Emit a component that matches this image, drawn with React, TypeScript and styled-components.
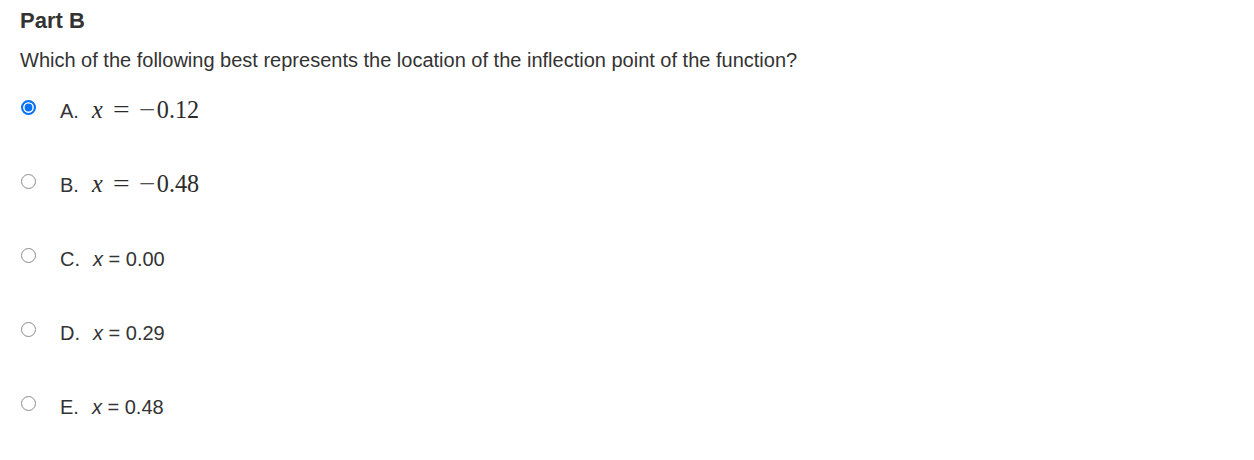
import React from "react";
import styled, { createGlobalStyle } from "styled-components";

const GlobalStyle = createGlobalStyle`
  html, body {
    margin: 0;
    padding: 0;
    background: #ffffff;
  }
  body {
    font-family: "Liberation Sans", Arial, sans-serif;
    color: #333333;
  }
`;

const Page = styled.main`
  padding: 8px 20px;
`;

const Heading = styled.h2`
  margin: 0;
  font-size: 22px;
  line-height: 25px;
  font-weight: 700;
  color: #333333;
`;

const Question = styled.p`
  margin: 16px 0 0;
  font-size: 20px;
  line-height: 23px;
`;

const OptionList = styled.div`
  margin-top: 24px;
  display: flex;
  flex-direction: column;
  gap: 44px;
`;

const Option = styled.label`
  display: flex;
  align-items: flex-start;
  height: 30px;
  cursor: pointer;
`;

const Radio = styled.input.attrs({ type: "radio" })`
  appearance: none;
  -webkit-appearance: none;
  flex: none;
  box-sizing: border-box;
  width: 15px;
  height: 15px;
  margin: 4px 0 0 1px;
  border-radius: 50%;
  border: 1px solid #8c8c8c;
  background: #ffffff;
  cursor: pointer;

  &:checked {
    border: 2px solid #0a72f5;
    background: #0a72f5;
    box-shadow: inset 0 0 0 1.6px #ffffff;
  }
`;

const TextLine = styled.span`
  margin-left: 24px;
  font-size: 20px;
  line-height: 30px;
  white-space: nowrap;
`;

const Letter = styled.span`
  margin-right: 13px;
`;

const TexMath = styled.span`
  font-family: "Liberation Serif", "Times New Roman", serif;
  font-size: 24.2px;
  line-height: 20px;
  color: #2b2b2b;
`;

const TexVar = styled.span`
  display: inline-block;
  width: 0.572em;
  font-style: italic;
`;

const TexOp = styled.span`
  display: inline-block;
  width: 0.778em;
  margin: 0 ${(p: { $spaced?: boolean }) => (p.$spaced ? "0.2778em" : "0")};
  text-align: center;
  transform: scaleX(1.22);
`;

const PlainVar = styled.em`
  font-style: italic;
`;

type Choice =
  | { letter: string; kind: "tex"; value: string }
  | { letter: string; kind: "plain"; value: string };

const choices: Choice[] = [
  { letter: "A.", kind: "tex", value: "0.12" },
  { letter: "B.", kind: "tex", value: "0.48" },
  { letter: "C.", kind: "plain", value: "0.00" },
  { letter: "D.", kind: "plain", value: "0.29" },
  { letter: "E.", kind: "plain", value: "0.48" },
];

export default function App() {
  return (
    <>
      <GlobalStyle />
      <Page>
        <Heading>Part B</Heading>
        <Question>
          Which of the following best represents the location of the inflection point of the function?
        </Question>
        <OptionList>
          {choices.map((c, i) => (
            <Option key={c.letter}>
              <Radio name="partB" defaultChecked={i === 0} />
              <TextLine>
                <Letter>{c.letter}</Letter>
                {c.kind === "tex" ? (
                  <TexMath>
                    <TexVar>x</TexVar>
                    <TexOp $spaced>=</TexOp>
                    <TexOp>−</TexOp>
                    {c.value}
                  </TexMath>
                ) : (
                  <span>
                    <PlainVar>x</PlainVar> = {c.value}
                  </span>
                )}
              </TextLine>
            </Option>
          ))}
        </OptionList>
      </Page>
    </>
  );
}
